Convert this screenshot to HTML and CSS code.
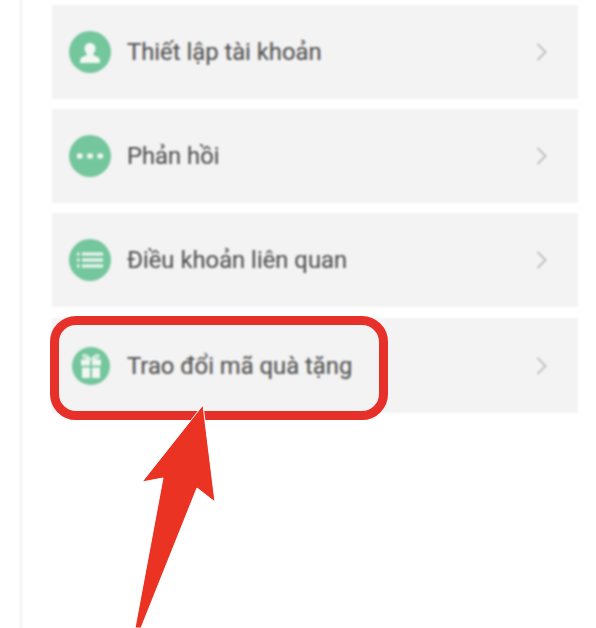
FILE: index.html
```html
<!DOCTYPE html>
<html>
	<head>
		<meta charset="UTF-8">
		<title>Cài đặt</title>
		<link rel="stylesheet" href="styles.css">
	</head>
	<body>
		<div class="page">
			<div class="menu">
				<div class="row">
					<svg class="icon" viewBox="0 0 42 42">
						<circle cx="21" cy="21" r="21" fill="#74c69d"/>
						<path d="M21 12c3.500 0 5.500 2.500 5.500 5.500 0 2.300-1 4-2.200 5v1.300c0 1 3.500 1.500 5.200 2.700 1 .7 1.500 2 1.500 5.500H11c0-3.500.5-4.800 1.500-5.500 1.700-1.200 5.200-1.700 5.200-2.700v-1.300c-1.200-1-2.200-2.700-2.200-5 0-3 2-5.500 5.500-5.500z" fill="#f3f7f4"/>
					</svg>
					<span class="label">Thiết lập tài khoản</span>
					<svg class="more" viewBox="0 0 12 22"><path d="M1.500 2l9 9-9 9" /></svg>
				</div>
				<div class="row">
					<svg class="icon" viewBox="0 0 42 42">
						<circle cx="21" cy="21" r="21" fill="#74c69d"/>
						<rect x="8" y="18.500" width="5.500" height="5" rx="1" fill="#f3f7f4"/>
						<rect x="18.300" y="18.500" width="5.500" height="5" rx="1" fill="#f3f7f4"/>
						<rect x="28.500" y="18.500" width="5.500" height="5" rx="1" fill="#f3f7f4"/>
					</svg>
					<span class="label">Phản hồi</span>
					<svg class="more" viewBox="0 0 12 22"><path d="M1.500 2l9 9-9 9" /></svg>
				</div>
				<div class="row">
					<svg class="icon" viewBox="0 0 42 42">
						<circle cx="21" cy="21" r="21" fill="#74c69d"/>
						<g fill="#f3f7f4">
							<rect x="8" y="13.500" width="2.500" height="3"/>
							<rect x="13" y="13.500" width="21" height="3"/>
							<rect x="8" y="19.500" width="2.500" height="3"/>
							<rect x="13" y="19.500" width="21" height="3"/>
							<rect x="8" y="25.500" width="2.500" height="3"/>
							<rect x="13" y="25.500" width="21" height="3"/>
						</g>
					</svg>
					<span class="label">Điều khoản liên quan</span>
					<svg class="more" viewBox="0 0 12 22"><path d="M1.500 2l9 9-9 9" /></svg>
				</div>
				<div class="row last">
					<svg class="icon" viewBox="0 0 42 42">
						<circle cx="22" cy="21" r="19" fill="#74c69d"/>
						<g fill="#f3f7f4">
							<rect x="12" y="14.500" width="9" height="6"/>
							<rect x="23" y="14.500" width="9" height="6"/>
							<rect x="13" y="22.500" width="8" height="10.500"/>
							<rect x="23" y="22.500" width="8" height="10.500"/>
						</g>
						<path d="M21 14c-2-3-5-5-6.500-4s1 4 6.500 4zM23 14c2-3 5-5 6.500-4s-1 4-6.500 4z" fill="none" stroke="#f3f7f4" stroke-width="1.500"/>
					</svg>
					<span class="label">Trao đổi mã quà tặng</span>
					<svg class="more" viewBox="0 0 12 22"><path d="M1.500 2l9 9-9 9" /></svg>
				</div>
			</div>
		</div>
		<div class="highlight"></div>
		<svg class="arrow" viewBox="0 0 596 628">
			<path d="M203 405L215 502 197 488 141 628H135L163 478 142 482z" fill="#ea3323" stroke="#fff" stroke-width="1" stroke-linejoin="round"/>
		</svg>
	</body>
</html>
```
FILE: styles.css
```css
html, body {
	margin: 0;
	height: 100%;
	background: #fff;
	overflow: hidden;
}
body {
	position: relative;
	width: 596px;
	height: 628px;
	font-family: Roboto, "Liberation Sans", sans-serif;
}
.page {
	height: 628px;
	box-sizing: border-box;
	margin-left: 20px;
	border-left: 2px solid #efefef;
	padding: 5px 18px 0 30px;
	filter: blur(0.8px);
}
.menu {
	display: flex;
	flex-direction: column;
	gap: 10px;
}
.row {
	display: flex;
	align-items: center;
	height: 94px;
	box-sizing: border-box;
	padding: 0 31px 0 17px;
	background: #f3f3f3;
}
.row.last {
	height: 95px;
	margin-top: 1px;
}
.icon {
	width: 42px;
	height: 42px;
	flex: none;
	margin-right: 16px;
}
.label {
	flex: 1;
	font-size: 23.800px;
	color: #555;
	-webkit-text-stroke: 0.2px #555;
}
.more {
	width: 11px;
	height: 20px;
	flex: none;
}
.more path {
	fill: none;
	stroke: #bdbdbd;
	stroke-width: 2;
}
.highlight {
	position: absolute;
	left: 50px;
	top: 316px;
	width: 338px;
	height: 104px;
	box-sizing: border-box;
	border: 9px solid #e8302a;
	border-radius: 26px;
	filter: blur(0.4px);
}
.arrow {
	position: absolute;
	left: 0;
	top: 0;
	width: 596px;
	height: 628px;
}
```
